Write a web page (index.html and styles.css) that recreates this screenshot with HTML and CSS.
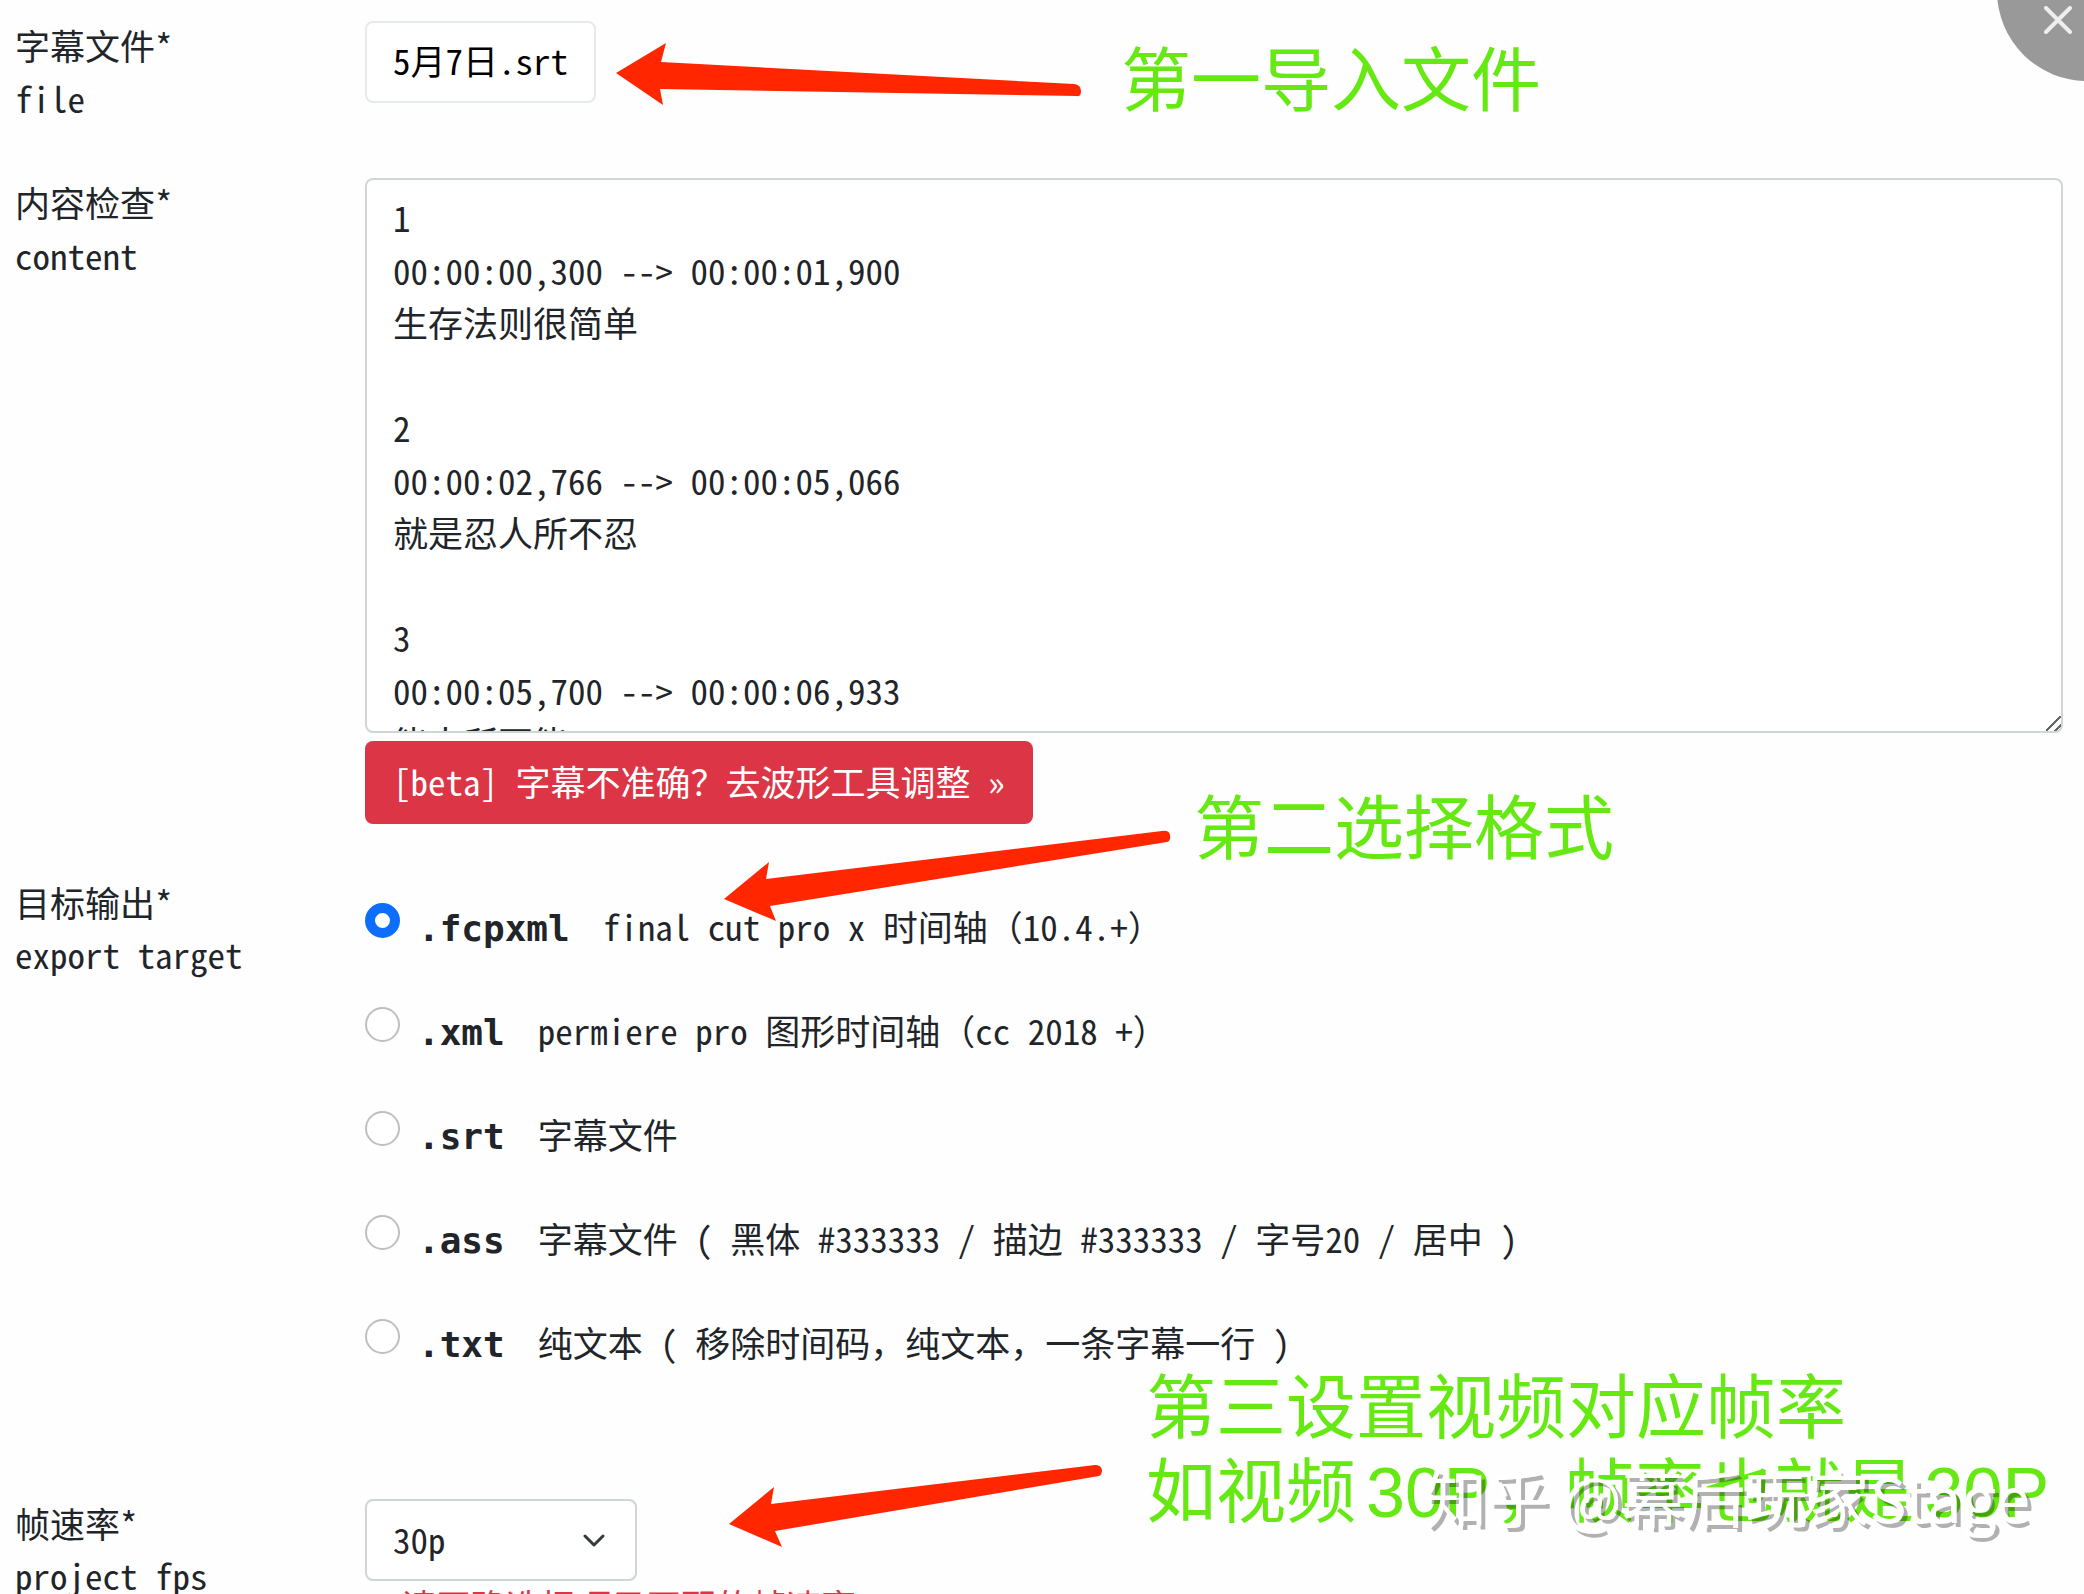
FILE: index.html
```html
<!DOCTYPE html>
<html lang="zh-CN">
<head>
    <meta charset="UTF-8">
    <meta name="viewport" content="width=device-width, initial-scale=1.0">
    <title>字幕转换</title>
    <link rel="stylesheet" href="styles.css">
</head>
<body>
    <form class="convert-form" id="convertForm">
        <div class="form-row">
            <label class="row-label" for="fileButton">字幕文件*<br>file</label>
            <div class="row-control">
                <button type="button" class="file-button" id="fileButton">5月7日.srt</button>
            </div>
        </div>

        <div class="form-row">
            <label class="row-label" for="content">内容检查*<br>content</label>
            <div class="row-control">
                <textarea class="content-box" id="content" name="content">1
00:00:00,300 --&gt; 00:00:01,900
生存法则很简单

2
00:00:02,766 --&gt; 00:00:05,066
就是忍人所不忍

3
00:00:05,700 --&gt; 00:00:06,933
能人所不能</textarea>
                <a class="wave-link" href="#wave">[beta] 字幕不准确？去波形工具调整 »</a>
            </div>
        </div>

        <div class="form-row" role="radiogroup" aria-labelledby="targetLabel">
            <div class="row-label" id="targetLabel">目标输出*<br>export target</div>
            <div class="row-control target-list">
                <div class="target">
                    <input type="radio" name="target" id="fcpxml" checked>
                    <label for="fcpxml"><strong>.fcpxml</strong><span>final cut pro x 时间轴（10.4.+）</span></label>
                </div>
                <div class="target">
                    <input type="radio" name="target" id="xml">
                    <label for="xml"><strong>.xml</strong><span>permiere pro 图形时间轴（cc 2018 +）</span></label>
                </div>
                <div class="target">
                    <input type="radio" name="target" id="srt">
                    <label for="srt"><strong>.srt</strong><span>字幕文件</span></label>
                </div>
                <div class="target">
                    <input type="radio" name="target" id="ass">
                    <label for="ass"><strong>.ass</strong><span>字幕文件 ( 黑体 #333333 / 描边 #333333 / 字号20 / 居中 )</span></label>
                </div>
                <div class="target">
                    <input type="radio" name="target" id="txt">
                    <label for="txt"><strong>.txt</strong><span>纯文本 ( 移除时间码，纯文本，一条字幕一行 )</span></label>
                </div>
            </div>
        </div>

        <div class="form-row">
            <label class="row-label" for="fps">帧速率*<br>project fps</label>
            <div class="row-control">
                <div class="select-wrap">
                    <select class="fps-select" id="fps" name="fps">
                        <option>24p</option>
                        <option>25p</option>
                        <option selected>30p</option>
                        <option>60p</option>
                    </select>
                    <svg class="chevron" viewBox="0 0 22 14" aria-hidden="true"><path d="M2 2l9 9 9-9"/></svg>
                </div>
                <p class="hint">请正确选择项目匹配的帧速率</p>
            </div>
        </div>
    </form>

    <!-- Tutorial arrows and notes -->
    <svg class="arrow arrow-file" viewBox="0 0 466 62" aria-hidden="true"><path d="M0 30L50 0L45 19L458 41Q465 42 465 48Q465 54 461 53L44 46L47 62Z"/></svg>
    <p class="note note-file">第一导入文件</p>

    <svg class="arrow arrow-target" viewBox="0 0 448 92" aria-hidden="true"><path d="M0 69L45 32L42 49L438 1Q445 0 446 5Q447 11 443 12L46 76L52 91Z"/></svg>
    <p class="note note-target">第二选择格式</p>

    <svg class="arrow arrow-fps" viewBox="0 0 374 83" aria-hidden="true"><path d="M0 59L45 22L42 39L366 0Q372 0 373 5Q373 10 370 11L46 66L53 82Z"/></svg>
    <p class="note note-fps">第三设置视频对应帧率<br>如视频<span class="latin">30P</span>，帧率也就是<span class="latin">30P</span></p>

    <p class="watermark">知乎 @幕后玩家Stage</p>

    <button type="button" class="close-button" aria-label="关闭">
        <svg viewBox="0 0 28 28" aria-hidden="true"><path d="M2 2l24 24M26 2L2 26"/></svg>
    </button>
</body>
</html>
```
FILE: styles.css
```css
* {
    box-sizing: border-box;
}

body {
    position: relative;
    height: 100vh;
    margin: 0;
    overflow: hidden;
    background-color: #fefefe;
    color: #212529;
    font-family: "Noto Sans Mono CJK SC", "Liberation Mono", "Noto Sans CJK SC", monospace;
    font-size: 35px;
    line-height: 1.5;
}

p {
    margin: 0;
}

button,
select,
textarea {
    color: inherit;
    font: inherit;
}

/* Form */
.convert-form {
    display: flex;
    flex-direction: column;
    gap: 52px;
    padding: 19px 21px 0 15px;
}

.form-row {
    display: grid;
    grid-template-columns: 350px 1fr;
}

.row-control {
    display: flex;
    flex-direction: column;
    align-items: flex-start;
    padding-top: 2px;
}

.file-button {
    height: 82px;
    padding: 0 26px 4px;
    background-color: #fff;
    border: 2px solid #e6eaea;
    border-radius: 8px;
    color: #000;
    cursor: pointer;
}

.content-box {
    display: block;
    width: 100%;
    height: 555px;
    padding: 11px 26px;
    overflow: hidden;
    background-color: #fff;
    border: 2px solid #d0d5d6;
    border-radius: 8px;
    resize: vertical;
}

.content-box::-webkit-resizer {
    background: linear-gradient(135deg, transparent 46%, #666 46%, #666 56%, transparent 56%, transparent 74%, #666 74%, #666 84%, transparent 84%);
}

.wave-link {
    margin-top: 8px;
    padding: 14px 28px 16px;
    background-color: #dc3545;
    border-radius: 8px;
    color: #fff;
    text-decoration: none;
}

/* Export targets */
.target-list {
    padding: 24px 0 25px;
}

.target {
    display: flex;
    align-items: flex-start;
    gap: 18px;
    min-height: 104px;
}

.target input {
    appearance: none;
    width: 35px;
    height: 35px;
    margin: 3px 0 0;
    background-color: #fff;
    border: 2px solid #bfbfbf;
    border-radius: 50%;
}

.target input:checked {
    border: 10px solid #0d6efd;
}

.target label {
    display: flex;
    align-items: baseline;
    gap: 33px;
}

.target strong {
    font-family: "DejaVu Sans Mono", monospace;
    font-size: 36px;
}

.select-wrap {
    position: relative;
}

.fps-select {
    appearance: none;
    width: 272px;
    height: 82px;
    padding: 0 26px;
    background-color: #fff;
    border: 2px solid #d0d5d6;
    border-radius: 8px;
}

.chevron {
    position: absolute;
    top: 35px;
    right: 32px;
    width: 22px;
    height: 14px;
    fill: none;
    stroke: #343a40;
    stroke-width: 3;
    stroke-linecap: round;
    stroke-linejoin: round;
    pointer-events: none;
}

.hint {
    padding-left: 36px;
    color: #dc3545;
    font-weight: 500;
    line-height: 48px;
}

/* Arrows and notes over the form */
.arrow {
    position: absolute;
    fill: #ff2600;
}

.arrow-file {
    top: 43px;
    left: 616px;
    width: 466px;
}

.arrow-target {
    top: 830px;
    left: 724px;
    width: 448px;
}

.arrow-fps {
    top: 1465px;
    left: 729px;
    width: 374px;
}

.note {
    position: absolute;
    color: #66e912;
    font-family: "Noto Sans CJK SC", sans-serif;
    font-size: 70px;
    line-height: 84px;
    white-space: nowrap;
}

.note-file {
    top: 34px;
    left: 1121px;
}

.note-target {
    top: 782px;
    left: 1194px;
}

.note-fps {
    top: 1361px;
    left: 1146px;
}

.latin {
    margin: 0 4px 0 10px;
    font-family: "Liberation Sans", sans-serif;
}

.watermark {
    position: absolute;
    right: 54px;
    bottom: 56px;
    color: #fff;
    font-family: "Noto Sans CJK SC", sans-serif;
    font-size: 62px;
    line-height: 84px;
    text-shadow: 4px 4px 0 rgba(0, 0, 0, 0.3);
    white-space: nowrap;
}

.close-button {
    position: absolute;
    top: -99px;
    right: -93px;
    width: 180px;
    height: 180px;
    padding: 0;
    background-color: #999;
    border: none;
    border-radius: 50%;
    cursor: pointer;
}

.close-button svg {
    position: absolute;
    top: 105px;
    left: 47px;
    width: 28px;
    height: 28px;
    stroke: #eee;
    stroke-width: 4;
    stroke-linecap: round;
}
```
